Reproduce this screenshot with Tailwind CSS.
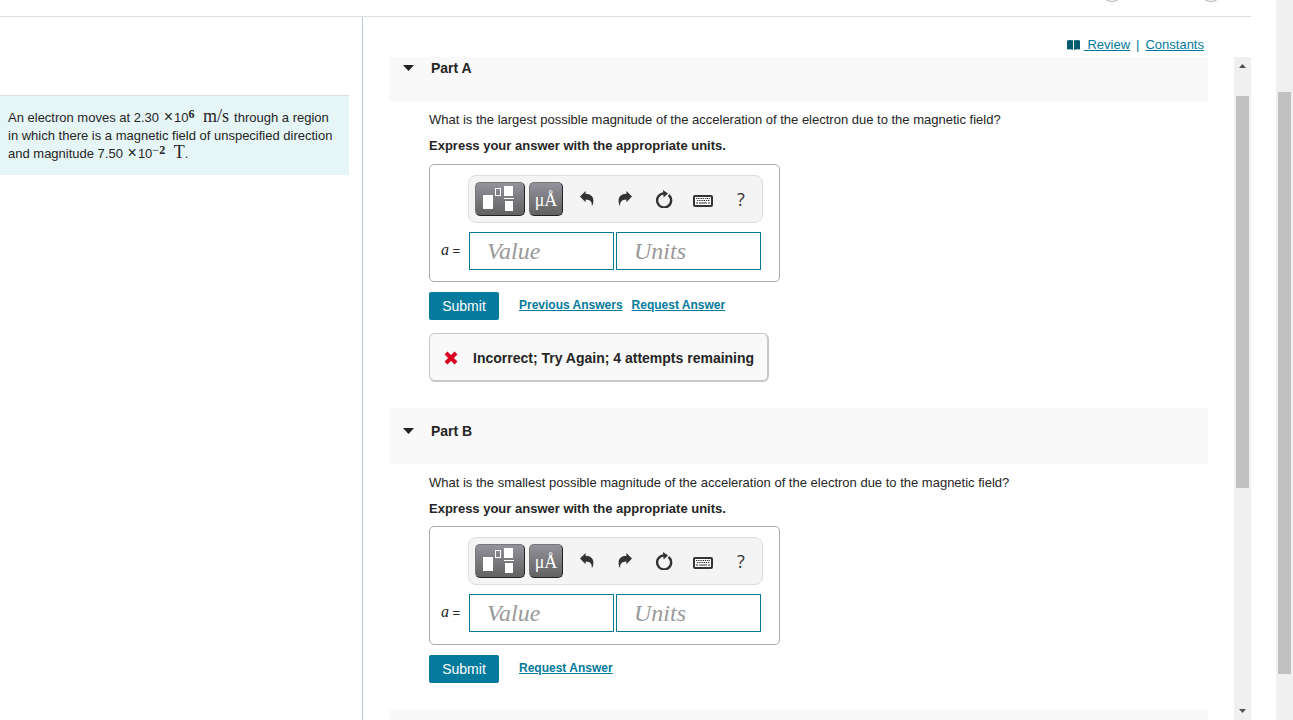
<!DOCTYPE html>
<html lang="en">
<head>
    <meta charset="UTF-8">
    <meta name="viewport" content="width=device-width, initial-scale=1.0">
    <title>Magnetic Force on an Electron</title>
    <script src="https://cdn.jsdelivr.net/npm/@tailwindcss/browser@4"></script>
</head>
<body class="bg-white font-['Liberation_Sans',Arial,sans-serif] text-[13px] leading-[18px] text-[#252525]">
    <!-- Shared icons -->
    <svg class="hidden" xmlns="http://www.w3.org/2000/svg">
        <symbol id="icon-template" viewBox="0 0 32 26">
            <rect x="1" y="10" width="10" height="14" fill="#fff"/>
            <rect x="13.5" y="3.5" width="5" height="7" fill="none" stroke="#fff"/>
            <rect x="22" y="1" width="9" height="10" fill="#fff"/>
            <rect x="22" y="13" width="10" height="1" fill="#fff"/>
            <rect x="23" y="16" width="8" height="10" fill="#fff"/>
        </symbol>
        <symbol id="icon-undo" viewBox="0 0 14 16">
            <path d="M0 5.6L5.6 0V2.8C10.6 2.8 13.6 5.6 13.4 10.2C13.2 12.6 12.8 14 11.8 15C12.2 11 10.4 8.8 5.6 8.6V11.2Z" fill="#333"/>
        </symbol>
        <symbol id="icon-redo" viewBox="0 0 14 16">
            <path d="M14 5.6L8.4 0V2.8C3.4 2.8 .4 5.6 .6 10.2C.8 12.6 1.2 14 2.2 15C1.8 11 3.6 8.8 8.4 8.6V11.2Z" fill="#333"/>
        </symbol>
        <symbol id="icon-reset" viewBox="0 0 18 18">
            <path d="M9 3.4A7 7 0 1 0 13.6 5" fill="none" stroke="#333" stroke-width="2.4"/>
            <path d="M8 0L13 3.5L8.6 7.4Z" fill="#333"/>
        </symbol>
        <symbol id="icon-keyboard" viewBox="0 0 20 12">
            <rect x="1" y="1" width="18" height="10" rx="1" fill="#fff" stroke="#333" stroke-width="2"/>
            <path d="M3 3.5H17M4 5.5H17" stroke="#333" stroke-dasharray="1.4 .8"/>
            <path d="M3 8H5M6 8H14M15 8H17" stroke="#333" stroke-width="1.2"/>
        </symbol>
    </svg>

    <div class="flex h-screen overflow-hidden">
        <div class="flex min-w-0 flex-1 flex-col pr-[25px]">
            <!-- Page header -->
            <header class="relative h-[17px] shrink-0 overflow-hidden border-b border-[#dddddd]">
                <div class="absolute right-[127px] -top-[22px] size-6 rounded-full border border-[#b0b0b0]"></div>
                <div class="absolute right-[28px] -top-[22px] size-6 rounded-full border border-[#b0b0b0]"></div>
            </header>

            <div class="flex min-h-0 flex-1">
                <!-- Problem statement -->
                <aside class="w-[363px] shrink-0 border-r border-[#b7c9d9] pt-[78px] pr-[13px]">
                    <p class="h-20 border-t border-[#d9dfdf] bg-[#e6f6f6] pt-[13px] pl-2 whitespace-nowrap">
                        An electron moves at 2.30 <span class="px-px text-base leading-0">&times;</span>10<sup class="static align-[4px] font-['Liberation_Serif',serif] text-xs leading-0 font-bold">6</sup> <span class="px-[5px] font-['Liberation_Serif',serif] text-lg leading-0">m/s</span>through a region<br>
                        in which there is a magnetic field of unspecified direction<br>
                        and magnitude 7.50 <span class="px-px text-base leading-0">&times;</span>10<sup class="static align-[4px] font-['Liberation_Serif',serif] text-xs leading-0">&minus;<b>2</b></sup> <span class="px-[5px] pr-0 font-['Liberation_Serif',serif] text-lg leading-0">T</span>.
                    </p>
                </aside>

                <!-- Parts -->
                <main class="flex min-w-0 flex-1 flex-col">
                    <div class="flex h-10 shrink-0 items-center justify-end gap-[6px] pt-4 pr-[47px] text-[#047a9c]">
                        <svg class="h-[10px] w-[13px]" viewBox="0 0 13 10" fill="#005a70"><path d="M0 .6Q3 -.4 6 .6V9.8Q3 9 0 9.6Z"/><path d="M13 .6Q10 -.4 7 .6V9.8Q10 9 13 9.6Z"/></svg>
                        <a href="#" class="-ml-[2px] underline">&nbsp;Review</a>
                        <span>|</span>
                        <a href="#" class="underline">Constants</a>
                    </div>

                    <div class="flex min-h-0 flex-1">
                        <div class="min-w-0 flex-1 overflow-hidden pr-[26px] pl-[26px]">
                            <!-- Part A -->
                            <section>
                                <h2 class="flex h-[45px] items-start bg-[#f9f9f9] pt-px pl-[14px] text-sm font-bold">
                                    <button type="button" aria-expanded="true" class="flex items-center gap-[17px] font-bold">
                                        <svg class="h-[6px] w-[11px]" viewBox="0 0 11 6"><path d="M0 0H11L5.5 6Z" fill="#222"/></svg>
                                        Part A
                                    </button>
                                </h2>
                                <div class="pt-[9px] pl-10">
                                    <p>What is the largest possible magnitude of the acceleration of the electron due to the magnetic field?</p>
                                    <p class="mt-2 font-bold">Express your answer with the appropriate units.</p>
                                    <div class="mt-[9px] flex w-[351px] flex-col gap-[9px] rounded-[5px] border border-[#aaaaaa] pt-[10px] pb-[11px] pl-[11px]">
                                        <div class="ml-[27px] flex h-12 w-[295px] items-center rounded-lg border border-[#dddddd] bg-[#f4f4f4] pl-[6px]">
                                            <button type="button" aria-label="Templates" class="flex h-[34px] w-[50px] items-center justify-center rounded-[5px] border border-t-[#777777] border-r-[#222222] border-b-[#222222] border-l-[#777777] bg-linear-to-b from-[#94929c] to-[#626262] pr-1 pb-[2px]"><svg class="h-[26px] w-8"><use href="#icon-template"/></svg></button>
                                            <button type="button" aria-label="Symbols" class="mr-[5px] ml-1 h-[34px] w-[34px] rounded-[5px] border border-t-[#777777] border-r-[#222222] border-b-[#222222] border-l-[#777777] bg-linear-to-b from-[#94929c] to-[#626262] pt-[2px] font-['Liberation_Serif',serif] text-lg text-white">&mu;&Aring;</button>
                                            <button type="button" aria-label="Undo" class="flex w-[38px] justify-center"><svg class="h-4 w-[14px]"><use href="#icon-undo"/></svg></button>
                                            <button type="button" aria-label="Redo" class="flex w-[38px] justify-center"><svg class="h-4 w-[14px]"><use href="#icon-redo"/></svg></button>
                                            <button type="button" aria-label="Reset" class="flex w-10 justify-center"><svg class="size-[18px]"><use href="#icon-reset"/></svg></button>
                                            <button type="button" aria-label="Keyboard shortcuts" class="flex w-[38px] justify-center pt-1"><svg class="h-3 w-5"><use href="#icon-keyboard"/></svg></button>
                                            <button type="button" aria-label="Help" class="w-[38px] font-['Open_Sans',sans-serif] text-lg leading-[18px] text-[#333333]">?</button>
                                        </div>
                                        <div class="flex items-center">
                                            <label for="value-a" class="w-7 whitespace-nowrap"><i class="font-['Liberation_Serif',serif] text-base leading-none">a</i> =</label>
                                            <input id="value-a" type="text" placeholder="Value" class="h-[38px] w-[145px] border border-[#047a9c] pl-[17px] font-['Liberation_Serif',serif] text-2xl italic placeholder:text-[#999999]">
                                            <input aria-label="Units" type="text" placeholder="Units" class="ml-[2px] h-[38px] w-[145px] border border-[#047a9c] pl-[17px] font-['Liberation_Serif',serif] text-2xl italic placeholder:text-[#999999]">
                                        </div>
                                    </div>
                                    <div class="mt-[10px] flex items-center text-xs font-bold text-[#047a9c]">
                                        <button type="submit" class="mr-5 h-7 w-[70px] rounded-xs bg-[#047a9c] text-sm font-normal text-white">Submit</button>
                                        <a href="#" class="mr-[9px] pb-[2px] underline">Previous Answers</a>
                                        <a href="#" class="pb-[2px] underline">Request Answer</a>
                                    </div>
                                    <div class="mt-[13px] flex h-[49px] w-[340px] items-center gap-[15px] rounded-md border border-r-2 border-b-2 border-[#c7c7c7] bg-[#f9f9f9] pt-px pl-[14px] text-sm font-bold whitespace-nowrap">
                                        <svg class="size-[14px]" viewBox="0 0 14 14"><path d="M2 2L12 12M12 2L2 12" stroke="#db0020" stroke-width="4"/></svg>
                                        Incorrect; Try Again; 4 attempts remaining
                                    </div>
                                </div>
                            </section>

                            <!-- Part B -->
                            <section class="mt-[26px]">
                                <h2 class="flex h-14 items-start bg-[#f9f9f9] pt-[13px] pl-[14px] text-sm font-bold">
                                    <button type="button" aria-expanded="true" class="flex items-center gap-[17px] font-bold">
                                        <svg class="h-[6px] w-[11px]" viewBox="0 0 11 6"><path d="M0 0H11L5.5 6Z" fill="#222"/></svg>
                                        Part B
                                    </button>
                                </h2>
                                <div class="pt-[10px] pl-10">
                                    <p>What is the smallest possible magnitude of the acceleration of the electron due to the magnetic field?</p>
                                    <p class="mt-2 font-bold">Express your answer with the appropriate units.</p>
                                    <div class="mt-2 flex w-[351px] flex-col gap-[9px] rounded-[5px] border border-[#aaaaaa] pt-[10px] pb-3 pl-[11px]">
                                        <div class="ml-[27px] flex h-12 w-[295px] items-center rounded-lg border border-[#dddddd] bg-[#f4f4f4] pl-[6px]">
                                            <button type="button" aria-label="Templates" class="flex h-[34px] w-[50px] items-center justify-center rounded-[5px] border border-t-[#777777] border-r-[#222222] border-b-[#222222] border-l-[#777777] bg-linear-to-b from-[#94929c] to-[#626262] pr-1 pb-[2px]"><svg class="h-[26px] w-8"><use href="#icon-template"/></svg></button>
                                            <button type="button" aria-label="Symbols" class="mr-[5px] ml-1 h-[34px] w-[34px] rounded-[5px] border border-t-[#777777] border-r-[#222222] border-b-[#222222] border-l-[#777777] bg-linear-to-b from-[#94929c] to-[#626262] pt-[2px] font-['Liberation_Serif',serif] text-lg text-white">&mu;&Aring;</button>
                                            <button type="button" aria-label="Undo" class="flex w-[38px] justify-center"><svg class="h-4 w-[14px]"><use href="#icon-undo"/></svg></button>
                                            <button type="button" aria-label="Redo" class="flex w-[38px] justify-center"><svg class="h-4 w-[14px]"><use href="#icon-redo"/></svg></button>
                                            <button type="button" aria-label="Reset" class="flex w-10 justify-center"><svg class="size-[18px]"><use href="#icon-reset"/></svg></button>
                                            <button type="button" aria-label="Keyboard shortcuts" class="flex w-[38px] justify-center pt-1"><svg class="h-3 w-5"><use href="#icon-keyboard"/></svg></button>
                                            <button type="button" aria-label="Help" class="w-[38px] font-['Open_Sans',sans-serif] text-lg leading-[18px] text-[#333333]">?</button>
                                        </div>
                                        <div class="flex items-center">
                                            <label for="value-b" class="w-7 whitespace-nowrap"><i class="font-['Liberation_Serif',serif] text-base leading-none">a</i> =</label>
                                            <input id="value-b" type="text" placeholder="Value" class="h-[38px] w-[145px] border border-[#047a9c] pl-[17px] font-['Liberation_Serif',serif] text-2xl italic placeholder:text-[#999999]">
                                            <input aria-label="Units" type="text" placeholder="Units" class="ml-[2px] h-[38px] w-[145px] border border-[#047a9c] pl-[17px] font-['Liberation_Serif',serif] text-2xl italic placeholder:text-[#999999]">
                                        </div>
                                    </div>
                                    <div class="mt-[10px] flex items-center text-xs font-bold text-[#047a9c]">
                                        <button type="submit" class="mr-5 h-7 w-[70px] rounded-xs bg-[#047a9c] text-sm font-normal text-white">Submit</button>
                                        <a href="#" class="pb-[2px] underline">Request Answer</a>
                                    </div>
                                </div>
                            </section>

                            <!-- Next part -->
                            <section class="mt-[26px] h-14 bg-[#f9f9f9]"></section>
                        </div>

                        <!-- Inner scrollbar -->
                        <div class="flex w-[17px] shrink-0 flex-col items-center bg-[#f0f0f0]">
                            <svg class="mt-[7px] h-1 w-[7px] shrink-0" viewBox="0 0 7 4"><path d="M0 4H7L3.5 0Z" fill="#505050"/></svg>
                            <div class="mt-7 w-[13px] bg-[#c1c1c1]" style="height: 59.2%"></div>
                            <svg class="mt-auto mb-[7px] h-1 w-[7px] shrink-0" viewBox="0 0 7 4"><path d="M0 0H7L3.5 4Z" fill="#505050"/></svg>
                        </div>
                    </div>
                </main>
            </div>
        </div>

        <!-- Page scrollbar -->
        <div class="w-[17px] shrink-0 bg-[#f0f0f0] px-[2px] pt-[92px]">
            <div class="bg-[#c1c1c1]" style="height: 92.7%"></div>
        </div>
    </div>
</body>
</html>
